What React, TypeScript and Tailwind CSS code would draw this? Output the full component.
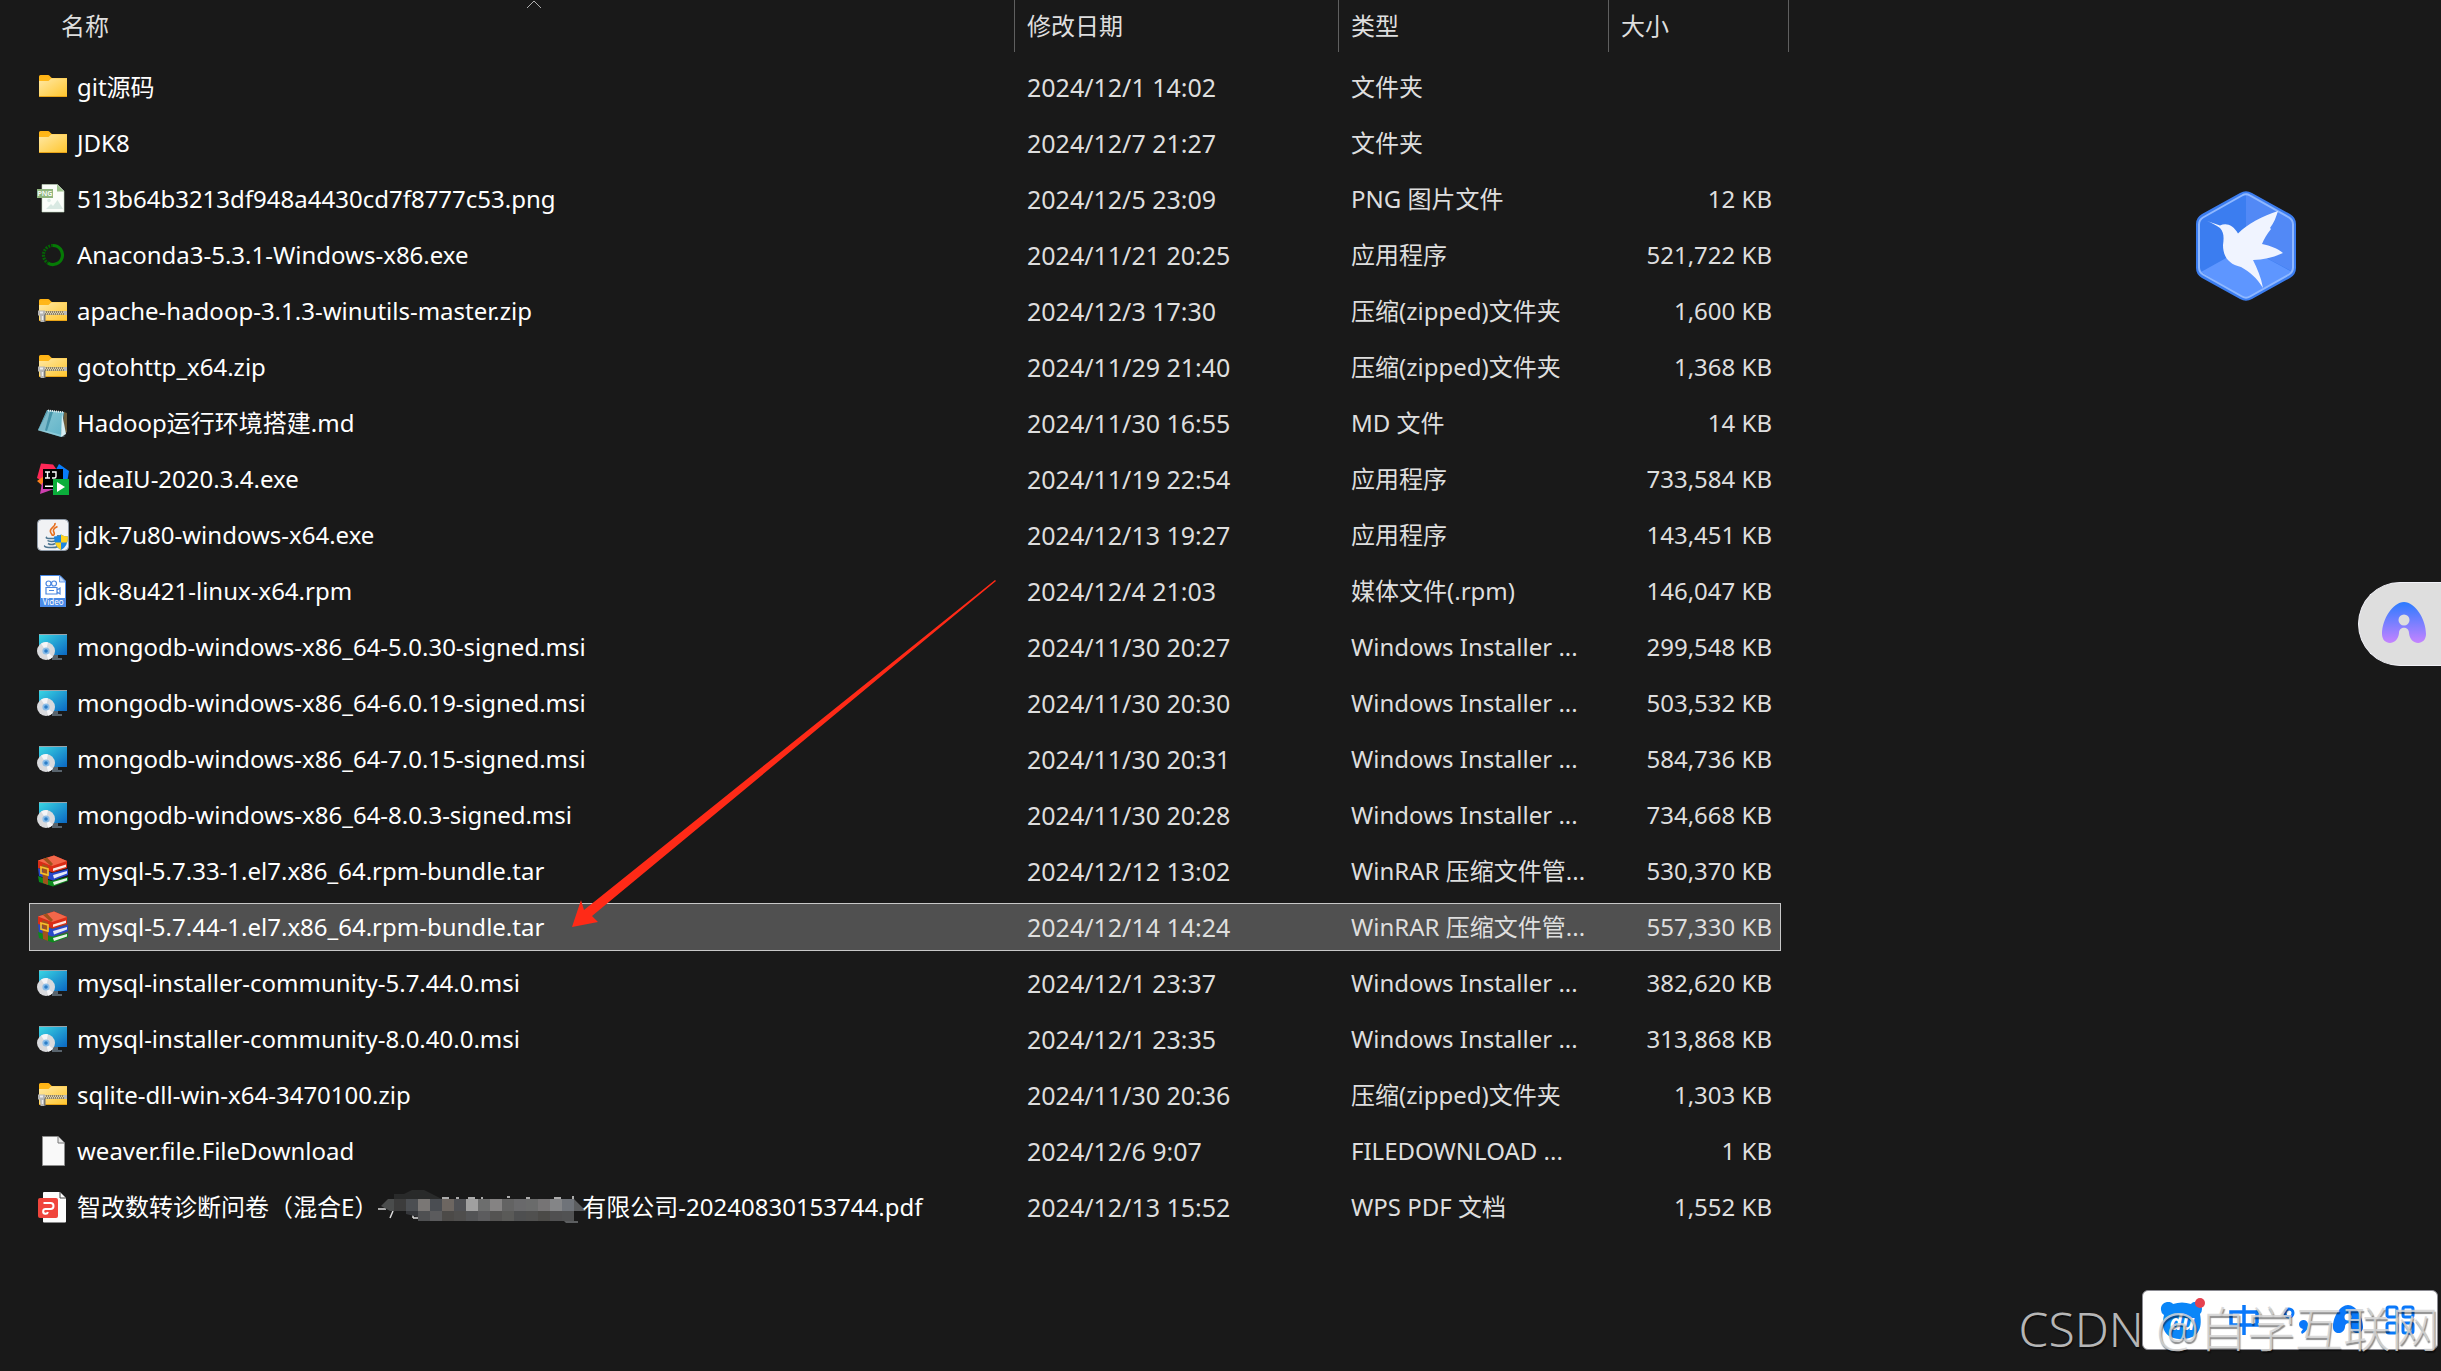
import React from "react";

type IconKind =
  | "folder"
  | "zip"
  | "png"
  | "anaconda"
  | "notepad"
  | "idea"
  | "java"
  | "video"
  | "msi"
  | "rar"
  | "blank"
  | "pdf";

type FileRow = {
  icon: IconKind;
  name: string;
  date: string;
  type: string;
  size?: string;
  tail?: string;
  selected?: boolean;
};

const files: FileRow[] = [
  { icon: "folder", name: "git源码", date: "2024/12/1 14:02", type: "文件夹" },
  { icon: "folder", name: "JDK8", date: "2024/12/7 21:27", type: "文件夹" },
  { icon: "png", name: "513b64b3213df948a4430cd7f8777c53.png", date: "2024/12/5 23:09", type: "PNG 图片文件", size: "12 KB" },
  { icon: "anaconda", name: "Anaconda3-5.3.1-Windows-x86.exe", date: "2024/11/21 20:25", type: "应用程序", size: "521,722 KB" },
  { icon: "zip", name: "apache-hadoop-3.1.3-winutils-master.zip", date: "2024/12/3 17:30", type: "压缩(zipped)文件夹", size: "1,600 KB" },
  { icon: "zip", name: "gotohttp_x64.zip", date: "2024/11/29 21:40", type: "压缩(zipped)文件夹", size: "1,368 KB" },
  { icon: "notepad", name: "Hadoop运行环境搭建.md", date: "2024/11/30 16:55", type: "MD 文件", size: "14 KB" },
  { icon: "idea", name: "ideaIU-2020.3.4.exe", date: "2024/11/19 22:54", type: "应用程序", size: "733,584 KB" },
  { icon: "java", name: "jdk-7u80-windows-x64.exe", date: "2024/12/13 19:27", type: "应用程序", size: "143,451 KB" },
  { icon: "video", name: "jdk-8u421-linux-x64.rpm", date: "2024/12/4 21:03", type: "媒体文件(.rpm)", size: "146,047 KB" },
  { icon: "msi", name: "mongodb-windows-x86_64-5.0.30-signed.msi", date: "2024/11/30 20:27", type: "Windows Installer ...", size: "299,548 KB" },
  { icon: "msi", name: "mongodb-windows-x86_64-6.0.19-signed.msi", date: "2024/11/30 20:30", type: "Windows Installer ...", size: "503,532 KB" },
  { icon: "msi", name: "mongodb-windows-x86_64-7.0.15-signed.msi", date: "2024/11/30 20:31", type: "Windows Installer ...", size: "584,736 KB" },
  { icon: "msi", name: "mongodb-windows-x86_64-8.0.3-signed.msi", date: "2024/11/30 20:28", type: "Windows Installer ...", size: "734,668 KB" },
  { icon: "rar", name: "mysql-5.7.33-1.el7.x86_64.rpm-bundle.tar", date: "2024/12/12 13:02", type: "WinRAR 压缩文件管...", size: "530,370 KB" },
  { icon: "rar", name: "mysql-5.7.44-1.el7.x86_64.rpm-bundle.tar", date: "2024/12/14 14:24", type: "WinRAR 压缩文件管...", size: "557,330 KB", selected: true },
  { icon: "msi", name: "mysql-installer-community-5.7.44.0.msi", date: "2024/12/1 23:37", type: "Windows Installer ...", size: "382,620 KB" },
  { icon: "msi", name: "mysql-installer-community-8.0.40.0.msi", date: "2024/12/1 23:35", type: "Windows Installer ...", size: "313,868 KB" },
  { icon: "zip", name: "sqlite-dll-win-x64-3470100.zip", date: "2024/11/30 20:36", type: "压缩(zipped)文件夹", size: "1,303 KB" },
  { icon: "blank", name: "weaver.file.FileDownload", date: "2024/12/6 9:07", type: "FILEDOWNLOAD ...", size: "1 KB" },
  { icon: "pdf", name: "智改数转诊断问卷（混合E）", tail: "有限公司-20240830153744.pdf", date: "2024/12/13 15:52", type: "WPS PDF 文档", size: "1,552 KB" },
];

const FolderShape = () => (
  <>
    <path d="M2 5.500Q2 4 3.500 4H11q1 0 1.800 1l2.200 2.500H2Z" fill="#ffb314" />
    <path d="M2 6h10l3 1h15v18.500H2Z" fill="#ffb719" />
    <path d="M2 10h9.500l3-2.700H30V25H2Z" fill="url(#folderFill)" />
    <path d="M2 25h28v1H2Z" fill="#e8a317" />
  </>
);

const iconShapes: Record<IconKind, React.ReactNode> = {
  folder: <FolderShape />,
  zip: (
    <>
      <FolderShape />
      <path d="M5 16h25v4H5Z" fill="#8f8260" />
      <path d="M8 17.200h20M9 18.900h20" stroke="#f4ecd2" strokeWidth="1.200" strokeDasharray="1 1" />
      <path d="M27 16h3v4h-3Z" fill="#b9b9b9" />
      <path d="M1 15.500h7v4L7.500 27h-4L3 20.500H1Z" fill="#b5b5b5" />
      <path d="M3 16.500h3v2H3ZM4.800 21h1.400v4H4.800Z" fill="#ededed" />
      <path d="M7 19.500h1.500V27H7Z" fill="#777" />
    </>
  ),
  png: (
    <>
      <path d="M5 1.500h15.500L27 8v21H5Z" fill="#fafdf9" stroke="#c5d9c0" strokeWidth=".6" />
      <path d="M20 1.500 27 8.500h-7Z" fill="#9cc18b" />
      <circle cx="12" cy="17.500" r="1.800" fill="#dcebe4" />
      <path d="m9 26 5-5 2 2 4.500-6L26 26Z" fill="#d8e9e2" />
      <path d="M0 6h16v9H0Z" fill="#8fb57e" />
      <text x="8" y="13" textAnchor="middle" fontSize="7" fontFamily="Noto Sans, sans-serif" fontWeight="600" fill="#fff">PNG</text>
    </>
  ),
  anaconda: (
    <>
      <path d="M16 6.500A9.500 9.500 0 1 1 11 24.100" fill="none" stroke="#067a06" strokeWidth="3.200" />
      <path d="M16 6.500A9.500 9.500 0 0 0 11 24.100" fill="none" stroke="#056305" strokeWidth="3.200" strokeDasharray="1.900 1" />
    </>
  ),
  notepad: (
    <>
      <path d="M27 5 30 6v19l-5 4Z" fill="#6d5c3b" />
      <path d="M10 3 27 5l-3 25L1 23Z" fill="url(#noteFill)" />
      <path d="m10 4-9 19 9 1 6-19Z" fill="#2d7f97" opacity=".7" />
      <path d="m11 4 2 0-5 19.500L28.500 29 25 30 1 23.500Z" fill="#a9dbe5" opacity=".55" />
      <path d="m25 6 4 21-5 3Z" fill="#d6eef3" />
      <path d="M11 3.500 27 5.500" stroke="#e6ecee" strokeWidth="2" strokeDasharray="1 1" />
    </>
  ),
  idea: (
    <>
      <path d="m4 .5 12 1 5 7L8 20 0 15Z" fill="#fe2857" />
      <path d="m22 1 10 7-2 12-14-8Z" fill="#087cfa" />
      <path d="m0 18 7-5v11Z" fill="#fc801d" />
      <path d="m5 20-2 11 14-5-4-6Z" fill="#cf3fb0" />
      <path d="m14 24 3 5 3-3Z" fill="#087cfa" />
      <path d="M6 6h20v20H6Z" fill="#000" />
      <path d="M8 9h5M10.500 9v6M8 15h5M15 9h4v4.500q0 1.500-1.500 1.500H15" fill="none" stroke="#fff" strokeWidth="1.400" />
      <path d="M8 22.500h8V24H8Z" fill="#fff" />
      <path d="M16 16h16v16H16Z" fill="#0bae3b" />
      <path d="m20 19 8 5-8 5Z" fill="#fff" />
    </>
  ),
  java: (
    <>
      <rect x=".5" y=".5" width="31" height="31" rx="4" fill="#f1f2f4" stroke="#8e9aa8" />
      <path d="M18 4c1 4-6 5-4.500 9 .5 1.500 2 2.500 2 4M20.500 7.500c-4 2-5 3.500-3.500 6 .8 1.500 0 2.500-1 3" fill="none" stroke="#e76f1e" strokeWidth="1.600" />
      <path d="M10 18c-3 1.500 4 2 9 1M10.500 21.500c1.500 1.200 6 1.200 9 0M11 24.500c2 1.200 5 1.200 7 0M8 26.500c-3 2 9 3 13 1M20 17c4-1 4 3 0 4" fill="none" stroke="#4d7590" strokeWidth="1.500" />
      <path d="M17 17.500q4.500 0 7-2 2.500 2 7 2 0 10-7 13.500-7-3.500-7-13.500Z" fill="#1b86e3" />
      <path d="M24 15.500q2.500 2 7 2 0 3.500-1 6h-6ZM18 23.500h6V31q-4.500-2.500-6-7.500Z" fill="#ffd21e" transform="translate(0 0)" />
    </>
  ),
  video: (
    <>
      <path d="M3.500.5H23L28.500 6v25h-25Z" fill="#fff" stroke="#4a8be8" />
      <path d="M22.500.5V7h6Z" fill="#c6dbfa" stroke="#4a8be8" strokeWidth=".8" />
      <path d="M3 23h26v9H3Z" fill="#4a8be8" />
      <g fill="none" stroke="#4a86e0" strokeWidth="1.200">
        <circle cx="11.500" cy="8.500" r="2.500" />
        <circle cx="17" cy="8.500" r="2.500" />
        <path d="M9 12.500h11V19H9ZM20 15l3-2v6l-3-2M12 15.500h5" />
      </g>
      <text x="16" y="30" textAnchor="middle" fontSize="8" fontFamily="Noto Sans, sans-serif" fill="#fff">Video</text>
    </>
  ),
  msi: (
    <>
      <path d="M15 23h6v4h4v2H15Z" fill="#59646d" />
      <path d="M2 3h28v21H2Z" fill="url(#screenFill)" />
      <path d="M2 3h28v1H2Z" fill="#9aa5ac" />
      <circle cx="9" cy="20" r="9" fill="#d9dadd" />
      <path d="M9 20 4 12.600A9 9 0 0 1 11 11.200ZM9 20l7 5.700a9 9 0 0 1-5 3.100Z" fill="#f5f5f7" />
      <circle cx="9" cy="20" r="3.600" fill="#8bbde8" />
      <circle cx="9" cy="20" r="1.800" fill="#2c7ec8" />
    </>
  ),
  rar: (
    <>
      <path d="m1 21 13 5 17-4v4l-15 5.500L2 27Z" fill="#0c8a1c" />
      <path d="m16 27 14-4v2.500L17 30Z" fill="#e6f3e4" />
      <path d="m1 13 14 5 16-4v6l-15 5.500L2 21Z" fill="#2747c9" />
      <path d="m16 20 14-4v2.500L17 23.500Z" fill="#e4e8f8" />
      <path d="M1 5.500 17 .5 30 6v7l-14 4.500L1 13Z" fill="#d92c16" />
      <path d="M1 5.500 17 .5 30 6 15 11Z" fill="#f2674a" />
      <path d="m16 13.500 13-4V12l-13 4Z" fill="#fbe6e0" />
      <path d="m6 4 4-1.500L16 9 14 11ZM5 9l6 2v19l-5-2Z" fill="#a1521c" />
      <path d="m4 12 7 2v6l-7-2Z" fill="none" stroke="#f6c02c" strokeWidth="1.700" />
    </>
  ),
  blank: (
    <>
      <path d="M5.500 1.500H21L27.500 8v22.500h-22Z" fill="#f9f9f9" stroke="#8d8d8d" />
      <path d="M21 1.500V8h6.500" fill="#e9e9e9" stroke="#777" />
    </>
  ),
  pdf: (
    <>
      <path d="M6 2q0-1 1-1h16l6 6v23.500q0 1-1 1H7q-1 0-1-1Z" fill="#fdfdfd" />
      <path d="M23 1v6h6" fill="none" stroke="#444" />
      <rect x="1" y="7" width="20" height="20" rx="2" fill="#f0453c" />
      <path d="M6.500 12h7a3 3 0 0 1 0 6H8.500a2.400 2.400 0 1 0 2.400 3" fill="none" stroke="#fff" strokeWidth="2" />
    </>
  ),
};

const FileIcon = ({ kind }: { kind: IconKind }) => (
  <svg className="h-8 w-8 shrink-0" viewBox="0 0 32 32" aria-hidden="true">
    {iconShapes[kind]}
  </svg>
);

// Shared gradients for the file icons
const IconDefs = () => (
  <svg className="absolute h-0 w-0" aria-hidden="true">
    <defs>
      <linearGradient id="folderFill" x1="0" y1="0" x2="1" y2="1">
        <stop offset="0" stopColor="#ffe9a6" />
        <stop offset="1" stopColor="#ffc62f" />
      </linearGradient>
      <linearGradient id="screenFill" x1="0" y1="0" x2="1" y2="1">
        <stop offset="0" stopColor="#3ad8e4" />
        <stop offset="1" stopColor="#0b67c2" />
      </linearGradient>
      <linearGradient id="noteFill" x1="0" y1="0" x2="1" y2="1">
        <stop offset="0" stopColor="#8cc9d6" />
        <stop offset="1" stopColor="#5fb3c8" />
      </linearGradient>
    </defs>
  </svg>
);

const mosaicTop = ["#3c3c3c", "#4b4e52", "#7a7775", "#4a4d52", "#6d6661", "#4f5054", "#a0a0a0", "#6d6e6e", "#858383", "#636363", "#69696b", "#6a6b6b", "#767475", "#848587", "#6f7379"];
const mosaicBottom = ["#4f5052", "#5b5b5d", "#4c4a48", "#4f4e4d", "#535456", "#5c5c5e", "#545352", "#5a5a58", "#4e4f50", "#50504f", "#4b4a47", "#505051", "#515253"];

// Pixelated patch that hides part of a file name
const Mosaic = () => (
  <svg className="-mr-1 h-9 w-[208px] shrink-0" viewBox="0 0 208 36" aria-hidden="true">
    <path d="M0 20h8M12 29l3-7M35 29V20M35 29h8M64 9h7M78 9h3M90 9h7M103 9h2M129 8h3M148 9h4M176 9h7M195 7v5" stroke="#dcdcdc" strokeWidth="1.500" />
    <path d="M16 10V5h10L34 1h12l8 4 10 5Z" fill="#292a2a" />
    <path d="m3 17 7-7h8v12H12Z" fill="#4a4c4c" />
    {mosaicTop.map((color, index) => (
      <rect key={index} x={16 + index * 12} y="10" width="12" height="12" fill={color} />
    ))}
    <path d="M28 22h12v6l-12-3Z" fill="#35373b" />
    {mosaicBottom.map((color, index) => (
      <rect key={index} x={40 + index * 12} y="22" width="12" height="10" fill={color} />
    ))}
    <path d="m196 10 12 12h-12ZM186 32h14v2h-12Z" fill="#5c5e60" />
  </svg>
);

const columnLabel = "h-[52px] border-r border-[#5f5f5f] pt-2 text-left font-normal";

const FileTable = () => (
  <table className="w-full table-fixed border-separate border-spacing-0 whitespace-nowrap">
    <colgroup>
      <col />
      <col className="w-[324px]" />
      <col className="w-[270px]" />
      <col className="w-[172px]" />
    </colgroup>
    <thead>
      <tr className="h-[59px] align-top text-[#dedede]">
        <th scope="col" className="relative p-0" aria-sort="ascending">
          <div className={`${columnLabel} pl-8`}>名称</div>
          <svg className="absolute left-1/2 top-0 ml-1 h-2 w-4" viewBox="0 0 16 8" aria-hidden="true">
            <path d="m1 8 7-7 7 7" fill="none" stroke="#b0b0b0" />
          </svg>
        </th>
        <th scope="col" className="p-0">
          <div className={`${columnLabel} pl-3`}>修改日期</div>
        </th>
        <th scope="col" className="p-0">
          <div className={`${columnLabel} pl-3`}>类型</div>
        </th>
        <th scope="col" className="p-0">
          <div className={`${columnLabel} -mr-2 pl-3`}>大小</div>
        </th>
      </tr>
    </thead>
    <tbody>
      {files.map((file) => {
        const cell = file.selected
          ? "flex h-12 items-center border-y border-[#c8c8c8] bg-[#505050]"
          : "flex h-12 items-center border-y border-transparent";
        return (
          <tr key={file.name} className="h-14 text-[#dedede]" aria-selected={!!file.selected}>
            <td className="p-0">
              <div className={`${cell} border-l pl-[7px] text-white`}>
                <FileIcon kind={file.icon} />
                <span className="ml-2 flex items-center">
                  {file.name}
                  {file.tail && <Mosaic />}
                  {file.tail}
                </span>
              </div>
            </td>
            <td className="p-0">
              <div className={`${cell} pl-3 text-[25px]`}>{file.date}</div>
            </td>
            <td className="p-0">
              <div className={`${cell} pl-3`}>{file.type}</div>
            </td>
            <td className="p-0">
              <div className={`${cell} justify-end border-r pr-2`}>{file.size}</div>
            </td>
          </tr>
        );
      })}
    </tbody>
  </table>
);

const BirdWidget = () => (
  <button type="button" aria-label="Bird" className="absolute right-[144px] top-[190px]">
    <svg className="h-28 w-[102px]" viewBox="0 0 102 112">
      <path d="M45 3q6-3.500 12 0l38 21q6 3.500 6 10v44q0 6.500-6 10l-38 21q-6 3.500-12 0L7 88q-6-3.500-6-10V34q0-6.500 6-10Z" fill="#3b7df0" />
      <path d="M51 3v54L98 82V33q0-5-4-7L57 5Z" fill="#5289f6" />
      <path d="m51 57 46 25-42 25q-4 2-8 0L6 82Z" fill="#5e96ff" />
      <path d="M47 5.500q4-2.500 8 0l39 22q4 2.500 4 7v43q0 4.500-4 7l-39 22q-4 2.500-8 0l-39-22q-4-2.500-4-7v-43q0-4.500 4-7Z" fill="none" stroke="#8fb8ff" strokeWidth="2" />
      <path d="M12 31l13 4.500c6-3 13-1 18 8C52 34 68 26 83 21c-2 6-4 12-8 17l1 1c-4 5-7 10-9 15 9 2 15 4 21 9-9 4-19 7-30 7 4 8 8 17 10 28-6-10-13-16-22-21C33 74 28 66 28 55c1-7 1-13-3-17-4-3-8-5-13-7Z" fill="#f0f4ff" />
    </svg>
  </button>
);

const AssistantTab = () => (
  <button
    type="button"
    aria-label="Assistant"
    className="absolute right-0 top-[582px] flex h-[84px] w-[83px] items-center rounded-l-full border border-r-0 border-[#f2f2f8] bg-[#dedede] pb-1 pl-[22px]"
  >
    <svg className="h-[43px] w-[46px]" viewBox="0 0 46 43">
      <defs>
        <linearGradient id="assistantFill" x1="0" y1="0" x2="0" y2="1">
          <stop offset="0" stopColor="#2a7bff" />
          <stop offset="1" stopColor="#c583ff" />
        </linearGradient>
      </defs>
      <path
        d="M23 1C34 1 45 18 45 33c0 12-16 12-17-1 0-7-10-7-10 0C17 45 1 45 1 33 1 18 12 1 23 1Z"
        fill="url(#assistantFill)"
      />
      <circle cx="23" cy="19" r="5.500" fill="#dedede" />
    </svg>
  </button>
);

const imeTools = [
  {
    label: "Chinese",
    drawing: <path d="M16 1v30M3 8h26v13H3Z" strokeWidth="3.500" />,
  },
  {
    label: "Punctuation",
    drawing: (
      <>
        <circle cx="9" cy="9" r="4" />
        <path d="M19 20a4.500 4.500 0 1 1 9 1q0 6-6 9l-1-2 2-3q-4-1-4-5Z" fill="#0a78fa" stroke="none" />
      </>
    ),
  },
  {
    label: "AI",
    drawing: (
      <>
        <path d="M16 1c8 0 15 12 15 22 0 8-11 8-12 0 0-5-6-5-6 0-1 8-12 8-12 0C1 13 8 1 16 1Z" fill="#0a78fa" stroke="none" />
        <circle cx="16" cy="13" r="3.500" fill="#fff" stroke="none" />
      </>
    ),
  },
  {
    label: "Toolbox",
    drawing: (
      <>
        <rect x="3" y="3" width="10" height="10" rx="2" />
        <rect x="19" y="3" width="10" height="10" rx="2" />
        <rect x="3" y="19" width="10" height="10" rx="2" />
        <rect x="19" y="19" width="10" height="10" rx="2" />
      </>
    ),
  },
];

const ImeBar = () => (
  <div className="absolute bottom-[21px] right-[3px] flex h-[60px] w-[296px] items-center rounded-md border border-[#8b8b92] bg-white pl-[15px]">
    <button type="button" aria-label="Input method" className="mr-3">
      <svg className="h-12 w-12" viewBox="0 0 48 48">
        <path d="M3 14C2 6 12 4 15 8q9-3 18 0c3-4 11-3 11 5q0 3-2 5c3 16-3 25-18 25S2 35 6 19q-3-2-3-5Z" fill="#0a86f8" />
        <text x="24" y="34" textAnchor="middle" fontSize="21" fontStyle="italic" fontWeight="700" fontFamily="Noto Sans, sans-serif" fill="#fff">du</text>
        <circle cx="42" cy="7" r="5" fill="#e5414f" />
      </svg>
    </button>
    {imeTools.map((tool) => (
      <button key={tool.label} type="button" aria-label={tool.label} className="flex w-[52px] justify-center">
        <svg className="h-8 w-8" viewBox="0 0 32 32" fill="none" stroke="#0a78fa" strokeWidth="3">
          {tool.drawing}
        </svg>
      </button>
    ))}
  </div>
);

const PointerArrow = () => (
  <svg className="pointer-events-none absolute left-[568px] top-[576px] h-[356px] w-[432px]" viewBox="568 576 432 356" aria-hidden="true">
    <path d="M572 927 581 900l3 10L995 580l1 1L592 916l6 6Z" fill="#ff2a17" />
  </svg>
);

export default function App() {
  return (
    <div className="relative min-h-screen overflow-hidden bg-[#191919] text-[24px] leading-9 [font-family:'Noto_Sans','Noto_Sans_CJK_SC',sans-serif]">
      <IconDefs />
      <main className="pl-[29px] pr-[660px]">
        <FileTable />
      </main>
      <PointerArrow />
      <BirdWidget />
      <AssistantTab />
      <ImeBar />
      <p className="pointer-events-none absolute bottom-[10px] right-[2px] text-[48px] leading-[64px] font-light whitespace-nowrap text-[#d4d4d4]/85 [text-shadow:1px_2px_1px_rgba(0,0,0,0.45)]">
        CSDN @自学互联网
      </p>
    </div>
  );
}
